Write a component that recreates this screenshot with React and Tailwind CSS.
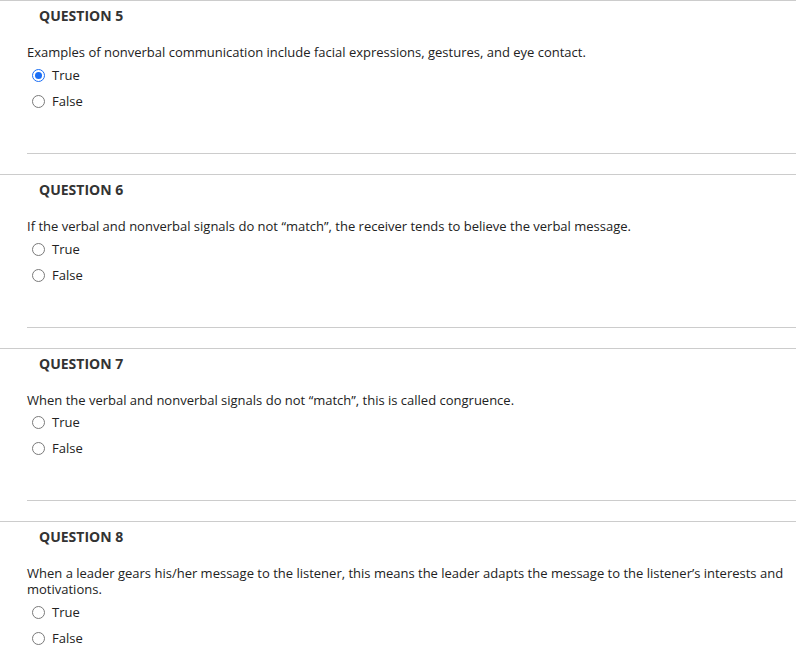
import React from "react";

const questions = [
  { n: 5, text: "Examples of nonverbal communication include facial expressions, gestures, and eye contact.", checked: "True", h: "h-[174px]", om: "mt-[2px]", lm: "mt-[39px]" },
  { n: 6, text: "If the verbal and nonverbal signals do not \u201cmatch\u201d, the receiver tends to believe the verbal message.", checked: null, h: "h-[174px]", om: "mt-[2px]", lm: "mt-[39px]" },
  { n: 7, text: "When the verbal and nonverbal signals do not \u201cmatch\u201d, this is called congruence.", checked: null, h: "h-[173px]", om: "mt-[1px]", lm: "mt-[39px]" },
  { n: 8, text: "When a leader gears his/her message to the listener, this means the leader adapts the message to the listener\u2019s interests and motivations.", checked: null, h: "h-[174px]", om: "mt-[2px]", lm: "mt-[39px]" },
];

function Radio({ checked }) {
  return (
    <span className="relative inline-flex h-[13px] w-[13px] shrink-0 items-center justify-center rounded-full">
      {checked ? (
        <span className="flex h-[13px] w-[13px] items-center justify-center rounded-full border border-[#1a6ef5] bg-white">
          <span className="h-[7px] w-[7px] rounded-full bg-[#1a6ef5]" />
        </span>
      ) : (
        <span className="h-[13px] w-[13px] rounded-full border border-[#7a7a7a] bg-white" />
      )}
    </span>
  );
}

function Option({ label, checked }) {
  return (
    <div className="flex h-[26px] items-center gap-[7px] pl-[32px] leading-[26px]">
      <Radio checked={checked} />
      <span>{label}</span>
    </div>
  );
}

export default function App() {
  return (
    <div
      className="w-[796px] bg-white text-[13px] text-[#222]"
      style={{ fontFamily: '"Open Sans", "Liberation Sans", sans-serif' }}
    >
      {questions.map((q) => (
        <div key={q.n} className={`${q.h} border-t border-[#cccccc]`}>
          <div className="pl-[39px] pt-[5px] text-[14px] font-bold leading-[20px] text-[#333]">
            QUESTION {q.n}
          </div>
          <div className="mt-[18px] pl-[27px] pr-[10px] leading-[16px]">{q.text}</div>
          <div className={q.om}>
            <Option label="True" checked={q.checked === "True"} />
            <Option label="False" checked={q.checked === "False"} />
          </div>
          {q.n !== 8 && (
            <div className={`ml-[27px] ${q.lm} border-t border-[#cccccc]`} />
          )}
        </div>
      ))}
    </div>
  );
}
